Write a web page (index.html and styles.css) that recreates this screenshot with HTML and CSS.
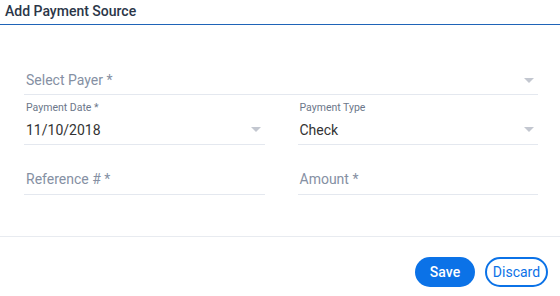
FILE: index.html
```html
<!DOCTYPE html>
<html>
<head>
<meta charset="utf-8">
<link rel="stylesheet" href="styles.css">
</head>
<body>
<div class="dialog">
  <div class="header">Add Payment Source</div>
  <div class="form">
    <div class="row full">
      <div class="field select">
        <div class="control"><span class="placeholder">Select Payer *</span><span class="caret"></span></div>
      </div>
    </div>
    <div class="row two">
      <div class="field select">
        <div class="label">Payment Date *</div>
        <div class="control"><span class="value">11/10/2018</span><span class="caret"></span></div>
      </div>
      <div class="field select">
        <div class="label">Payment Type</div>
        <div class="control"><span class="value">Check</span><span class="caret"></span></div>
      </div>
    </div>
    <div class="row two plain">
      <div class="field">
        <div class="control"><span class="placeholder">Reference # *</span></div>
      </div>
      <div class="field">
        <div class="control"><span class="placeholder">Amount *</span></div>
      </div>
    </div>
  </div>
  <div class="footer">
    <button class="btn primary">Save</button>
    <button class="btn outline">Discard</button>
  </div>
</div>
</body>
</html>
```
FILE: styles.css
```css
* { box-sizing: border-box; }
body {
  margin: 0;
  background: #fff;
  font-family: Roboto, "Liberation Sans", sans-serif;
  color: #333;
}
.dialog { width: 560px; height: 296px; }
.header {
  height: 25px;
  padding: 3px 0 0 5px;
  font-size: 14px;
  font-weight: 500;
  color: #2b3648;
  border-bottom: 1.5px solid #1f64b8;
}
.form {
  padding: 44px 22px 0 24px;
  height: 212px;
  border-bottom: 1px solid #e8ebf0;
}
.row.two {
  display: flex;
  gap: 33px;
  margin-top: 6px;
}
.row.two .field { width: 241px; }
.row.plain { margin-top: 20px; }
.field { border-bottom: 1px solid #e4e8ef; }
.label {
  font-size: 10.5px;
  color: #6c778a;
  padding-left: 2px;
  height: 14px;
  line-height: 14px;
}
.control {
  display: flex;
  align-items: center;
  justify-content: space-between;
  height: 29px;
  padding: 0 4px 0 2px;
  font-size: 14px;
}
.row.full .control { height: 25px; padding-bottom: 3px; }
.row.plain .control { padding-bottom: 2px; }
.placeholder { color: #8590a3; }
.value { color: #333; }
.caret {
  width: 0; height: 0;
  border-left: 5px solid transparent;
  border-right: 5px solid transparent;
  border-top: 5px solid #c3c7d0;
}
.footer {
  display: flex;
  justify-content: flex-end;
  gap: 10px;
  padding: 20px 12px 0 0;
}
.btn {
  height: 30px;
  border-radius: 15px;
  font-family: Roboto, "Liberation Sans", sans-serif;
  font-size: 14px;
  font-weight: 500;
  padding: 0;
  cursor: pointer;
}
.primary {
  width: 60px;
  background: #0b72e7;
  color: #fff;
  border: none;
}
.outline {
  width: 63px;
  background: #fff;
  color: #0b72e7;
  border: 2px solid #0b72e7;
  font-weight: 400;
}
```
